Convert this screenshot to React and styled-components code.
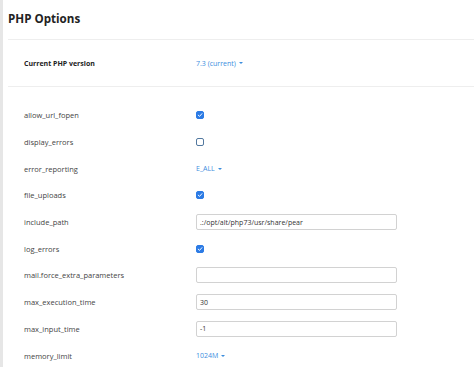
import React from 'react'
import styled, { createGlobalStyle } from 'styled-components'

const GlobalStyle = createGlobalStyle`
  html, body {
    margin: 0;
    padding: 0;
    background: #fff;
  }
  body {
    font-family: "Open Sans", "Noto Sans", sans-serif;
    color: #333;
  }
`

const Page = styled.div`
  display: flex;
  min-height: 367px;
`

const Strip = styled.div`
  width: 3px;
  flex: none;
  background: #e6e6e6;
`

const Main = styled.div`
  flex: 1;
  padding-left: 5px;
`

const Header = styled.div`
  height: 39px;
  display: flex;
  align-items: center;
  border-bottom: 1px solid #eeeeee;
`

const Title = styled.h1`
  margin: 0;
  font-size: 11.6px;
  font-weight: 700;
  color: #222;
  line-height: 1;
  margin-top: -2px;
`

const Body = styled.div`
  padding-left: 16px;
`

const Row = styled.div`
  display: grid;
  grid-template-columns: 172px 1fr;
  align-items: center;
  height: ${p => p.$height || '26.7px'};
  font-size: 7.5px;
`

const VersionRow = styled(Row)`
  margin-left: -16px;
  padding-left: 16px;
  border-bottom: 1px solid #eeeeee;
`

const Label = styled.div`
  color: ${p => (p.$strong ? '#222' : '#444')};
  font-weight: ${p => (p.$strong ? 700 : 400)};
  font-size: ${p => (p.$strong ? '7px' : '7.5px')};
`

const Options = styled.div`
  padding-top: 15px;
`

const Dropdown = styled.div`
  color: #3c8ede;
  font-size: 7px;
  display: flex;
  align-items: center;
  gap: 3px;
`

const Caret = styled.span`
  width: 0;
  height: 0;
  border-left: 2px solid transparent;
  border-right: 2px solid transparent;
  border-top: 2px solid #3c8ede;
`

const Box = styled.span`
  width: 8px;
  height: 8px;
  box-sizing: border-box;
  border-radius: 2px;
  display: flex;
  align-items: center;
  justify-content: center;
  background: ${p => (p.$checked ? '#2c7be5' : '#fff')};
  border: 1.3px solid ${p => (p.$checked ? '#2c7be5' : '#52789f')};
`

const Input = styled.div`
  width: 201px;
  height: 16px;
  box-sizing: border-box;
  border: 1px solid #d2d2d2;
  border-radius: 2px;
  padding: 0 3px;
  display: flex;
  align-items: center;
  font-size: 7px;
  color: #333;
`

const Checkbox = ({ checked }) => (
  <Box $checked={checked}>
    {checked && (
      <svg width="6" height="6" viewBox="0 0 10 10">
        <path d="M2 5.2 L4.2 7.3 L8.2 2.8" fill="none" stroke="#fff" strokeWidth="1.6" strokeLinecap="round" strokeLinejoin="round" />
      </svg>
    )}
  </Box>
)

const Select = ({ value }) => (
  <Dropdown>
    {value}
    <Caret />
  </Dropdown>
)

const options = [
  { name: 'allow_url_fopen', type: 'check', value: true },
  { name: 'display_errors', type: 'check', value: false },
  { name: 'error_reporting', type: 'select', value: 'E_ALL' },
  { name: 'file_uploads', type: 'check', value: true },
  { name: 'include_path', type: 'text', value: '.:/opt/alt/php73/usr/share/pear' },
  { name: 'log_errors', type: 'check', value: true },
  { name: 'mail.force_extra_parameters', type: 'text', value: '' },
  { name: 'max_execution_time', type: 'text', value: '30' },
  { name: 'max_input_time', type: 'text', value: '-1' },
  { name: 'memory_limit', type: 'select', value: '1024M' },
]

const renderControl = o => {
  if (o.type === 'check') return <Checkbox checked={o.value} />
  if (o.type === 'select') return <Select value={o.value} />
  return <Input>{o.value}</Input>
}

export default function App() {
  return (
    <>
      <GlobalStyle />
      <Page>
        <Strip />
        <Main>
          <Header>
            <Title>PHP Options</Title>
          </Header>
          <Body>
            <VersionRow $height="46px">
              <Label $strong>Current PHP version</Label>
              <Select value="7.3 (current)" />
            </VersionRow>
            <Options>
              {options.map(o => (
                <Row key={o.name}>
                  <Label>{o.name}</Label>
                  <div>{renderControl(o)}</div>
                </Row>
              ))}
            </Options>
          </Body>
        </Main>
      </Page>
    </>
  )
}
